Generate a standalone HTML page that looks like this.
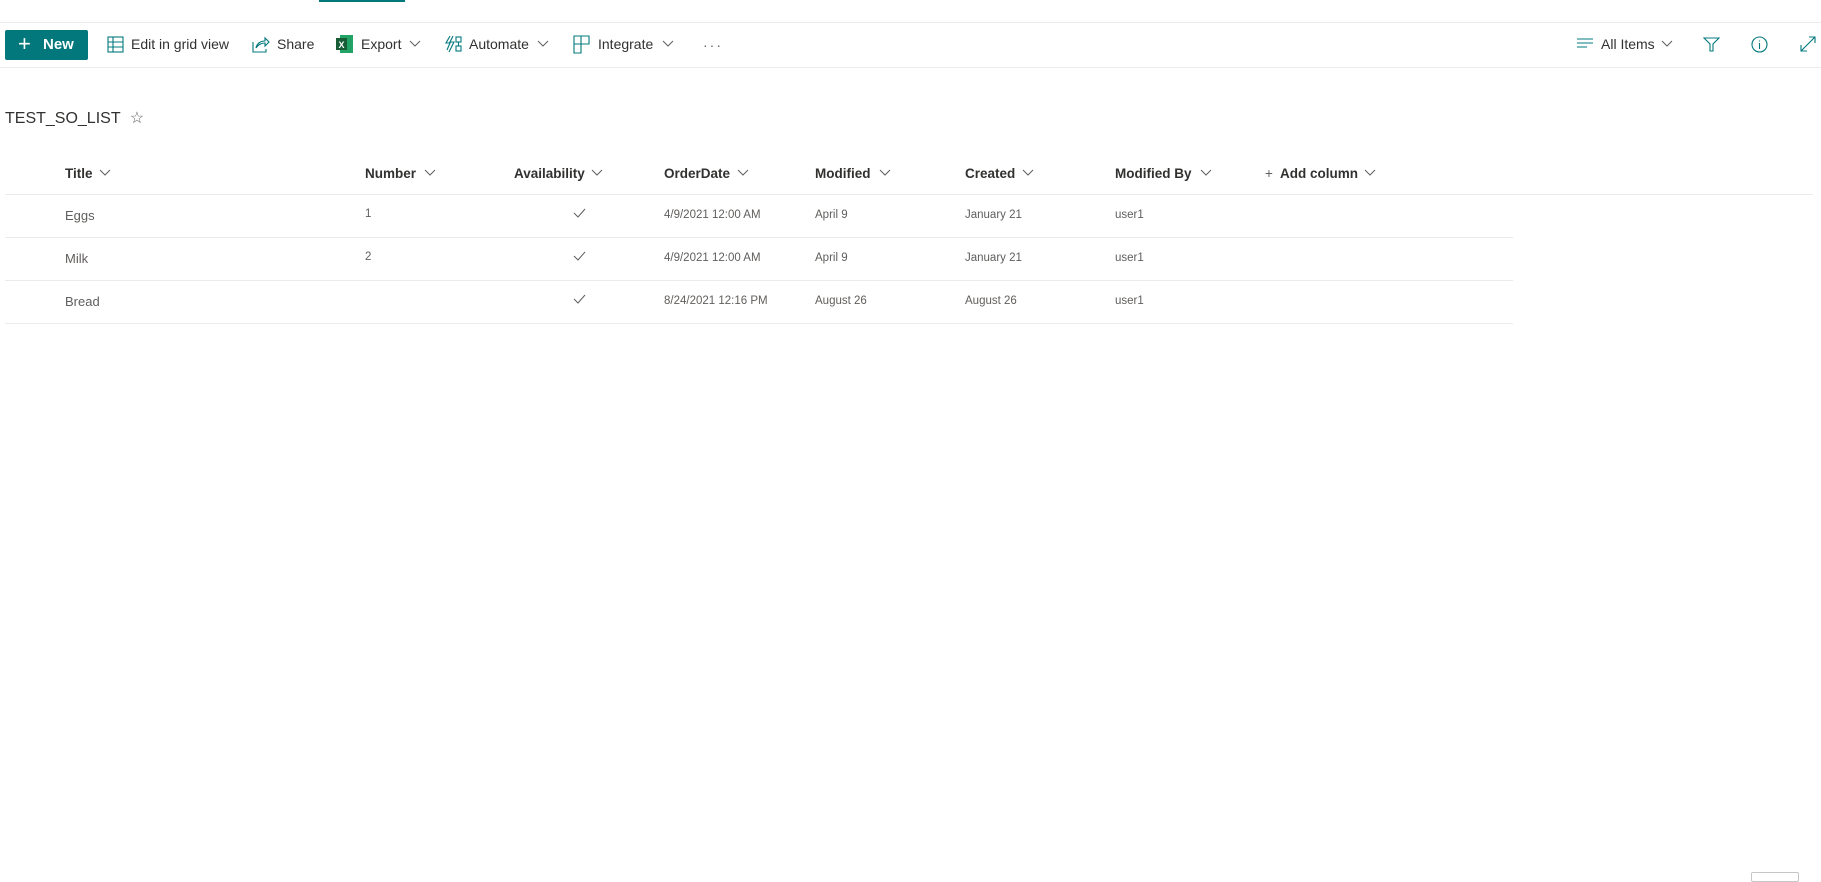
<!DOCTYPE html>
<html><head><style>
*{margin:0;padding:0;box-sizing:border-box}
body{width:1821px;height:879px;background:#fff;font-family:"Liberation Sans",sans-serif;color:#323130;position:relative;overflow:hidden}
.a{position:absolute;white-space:nowrap}
.tb{font-size:14px;top:36px;line-height:16px}
.h{font-size:13.5px;font-weight:bold;top:166px;line-height:16px;color:#323130}
.c{font-size:13px;color:#605e5c}
.d{font-size:11.5px;color:#605e5c}
.line{position:absolute;height:1px;background:#edebe9}
svg{position:absolute}
</style></head><body>
<div class="a" style="left:319px;top:0;width:86px;height:2px;background:#03787c"></div>
<div class="line" style="left:0;top:22px;width:1821px"></div>
<div class="line" style="left:0;top:67px;width:1821px"></div>

<div class="a" style="left:5px;top:30px;width:83px;height:30px;background:#03787c;border-radius:2px;color:#fff;font-weight:bold;font-size:15px;line-height:30px;padding-left:14px">
<span style="font-weight:normal;font-size:22px;position:absolute;left:13px;top:-1px">+</span><span style="margin-left:24px">New</span></div>

<svg style="left:107px;top:36px" width="17" height="17" viewBox="0 0 17 17" fill="none" stroke="#03787c" stroke-width="1.1"><rect x="1" y="1" width="15" height="15"/><path d="M1 6h15M1 11h15M6 1v15"/></svg>
<div class="a tb" style="left:131px">Edit in grid view</div>
<svg style="left:252px;top:36px" width="18" height="17" viewBox="0 0 18 17" fill="none" stroke="#03787c" stroke-width="1.1"><path d="M1 6v10h13v-3"/><path d="M4 12c1-5 5-7 9-7V2l4 4-4 4V7c-4 0-7 2-9 5z"/></svg>
<div class="a tb" style="left:277px">Share</div>
<svg style="left:336px;top:35px" width="17" height="18" viewBox="0 0 17 18"><rect x="4" y="0" width="13" height="18" fill="#21a366"/><rect x="0" y="3" width="11" height="12" fill="#185c37"/><text x="2.5" y="13" font-size="9" fill="#fff" font-family="Liberation Sans" font-weight="bold">X</text></svg>
<div class="a tb" style="left:361px">Export</div>
<svg style="left:409px;top:40px" width="12" height="8" viewBox="0 0 12 8" fill="none" stroke="#605e5c"><path d="M1 1l5 5 5-5"/></svg>
<svg style="left:444px;top:35px" width="19" height="19" viewBox="0 0 19 19" fill="none" stroke="#03787c" stroke-width="1.1"><path d="M6 1L2 8h4l-3 7M9 1L6 7h4l-5 10"/><rect x="12" y="2" width="5" height="5"/><rect x="12" y="11" width="5" height="5"/><path d="M14.5 7v4"/></svg>
<div class="a tb" style="left:469px">Automate</div>
<svg style="left:537px;top:40px" width="12" height="8" viewBox="0 0 12 8" fill="none" stroke="#605e5c"><path d="M1 1l5 5 5-5"/></svg>
<svg style="left:573px;top:35px" width="17" height="19" viewBox="0 0 17 19" fill="none" stroke="#03787c" stroke-width="1.1"><path d="M1 1h15v8H8v9H1zM1 9h7M8 1v8"/></svg>
<div class="a tb" style="left:598px">Integrate</div>
<svg style="left:662px;top:40px" width="12" height="8" viewBox="0 0 12 8" fill="none" stroke="#605e5c"><path d="M1 1l5 5 5-5"/></svg>
<div class="a tb" style="left:703px;top:37px;color:#605e5c;letter-spacing:2px">···</div>

<svg style="left:1577px;top:38px" width="17" height="12" viewBox="0 0 17 12" stroke="#03787c" stroke-width="1.1"><path d="M0 1h16M0 5h16M0 9h10"/></svg>
<div class="a tb" style="left:1601px">All Items</div>
<svg style="left:1661px;top:40px" width="12" height="8" viewBox="0 0 12 8" fill="none" stroke="#605e5c"><path d="M1 1l5 5 5-5"/></svg>
<svg style="left:1703px;top:37px" width="17" height="15" viewBox="0 0 17 15" fill="none" stroke="#03787c" stroke-width="1.1"><path d="M1 1h15l-6 6v7H7V7z"/></svg>
<svg style="left:1751px;top:36px" width="17" height="17" viewBox="0 0 17 17" fill="none" stroke="#03787c" stroke-width="1.1"><circle cx="8.5" cy="8.5" r="7.5"/><path d="M8.5 7v6M8.5 4.5v1"/></svg>
<svg style="left:1800px;top:36px" width="16" height="16" viewBox="0 0 16 16" fill="none" stroke="#03787c" stroke-width="1.1"><path d="M1 15L15 1M9 1h6v6M1 9v6h6"/></svg>

<div class="a" style="left:5px;top:108px;font-size:16px;color:#323130">TEST_SO_LIST <span style="margin-left:5px;color:#605e5c">☆</span></div>

<div class="a h" style="left:65px">Title</div>
<div class="a h" style="left:365px">Number</div>
<div class="a h" style="left:514px">Availability</div>
<div class="a h" style="left:664px">OrderDate</div>
<div class="a h" style="left:815px">Modified</div>
<div class="a h" style="left:965px">Created</div>
<div class="a h" style="left:1115px">Modified By</div>
<div class="a h" style="left:1265px;font-weight:normal;color:#605e5c">+</div>
<div class="a h" style="left:1280px">Add column</div>
<svg style="left:99px;top:169px" width="12" height="8" viewBox="0 0 12 8" fill="none" stroke="#605e5c"><path d="M1 1l5 5 5-5"/></svg>
<svg style="left:424px;top:169px" width="12" height="8" viewBox="0 0 12 8" fill="none" stroke="#605e5c"><path d="M1 1l5 5 5-5"/></svg>
<svg style="left:591px;top:169px" width="12" height="8" viewBox="0 0 12 8" fill="none" stroke="#605e5c"><path d="M1 1l5 5 5-5"/></svg>
<svg style="left:737px;top:169px" width="12" height="8" viewBox="0 0 12 8" fill="none" stroke="#605e5c"><path d="M1 1l5 5 5-5"/></svg>
<svg style="left:879px;top:169px" width="12" height="8" viewBox="0 0 12 8" fill="none" stroke="#605e5c"><path d="M1 1l5 5 5-5"/></svg>
<svg style="left:1022px;top:169px" width="12" height="8" viewBox="0 0 12 8" fill="none" stroke="#605e5c"><path d="M1 1l5 5 5-5"/></svg>
<svg style="left:1200px;top:169px" width="12" height="8" viewBox="0 0 12 8" fill="none" stroke="#605e5c"><path d="M1 1l5 5 5-5"/></svg>
<svg style="left:1364px;top:169px" width="12" height="8" viewBox="0 0 12 8" fill="none" stroke="#605e5c"><path d="M1 1l5 5 5-5"/></svg>
<div class="line" style="left:5px;top:194px;width:1808px"></div>

<div class="a c" style="left:65px;top:208px">Eggs</div>
<div class="a d" style="left:365px;top:208px">1</div>
<svg style="left:573px;top:208px" width="13" height="10" viewBox="0 0 13 10" fill="none" stroke="#605e5c"><path d="M1 5l4 4 7-8"/></svg>
<div class="a d" style="left:664px;top:209px">4/9/2021 12:00 AM</div>
<div class="a d" style="left:815px;top:209px">April 9</div>
<div class="a d" style="left:965px;top:209px">January 21</div>
<div class="a d" style="left:1115px;top:209px">user1</div>
<div class="line" style="left:5px;top:237px;width:1508px"></div>

<div class="a c" style="left:65px;top:251px">Milk</div>
<div class="a d" style="left:365px;top:251px">2</div>
<svg style="left:573px;top:251px" width="13" height="10" viewBox="0 0 13 10" fill="none" stroke="#605e5c"><path d="M1 5l4 4 7-8"/></svg>
<div class="a d" style="left:664px;top:252px">4/9/2021 12:00 AM</div>
<div class="a d" style="left:815px;top:252px">April 9</div>
<div class="a d" style="left:965px;top:252px">January 21</div>
<div class="a d" style="left:1115px;top:252px">user1</div>
<div class="line" style="left:5px;top:280px;width:1508px"></div>

<div class="a c" style="left:65px;top:294px">Bread</div>
<svg style="left:573px;top:294px" width="13" height="10" viewBox="0 0 13 10" fill="none" stroke="#605e5c"><path d="M1 5l4 4 7-8"/></svg>
<div class="a d" style="left:664px;top:295px">8/24/2021 12:16 PM</div>
<div class="a d" style="left:815px;top:295px">August 26</div>
<div class="a d" style="left:965px;top:295px">August 26</div>
<div class="a d" style="left:1115px;top:295px">user1</div>
<div class="line" style="left:5px;top:323px;width:1508px"></div>

<div class="a" style="left:1751px;top:872px;width:48px;height:10px;border:1px solid #c8c6c4;border-radius:2px"></div>
</body></html>
